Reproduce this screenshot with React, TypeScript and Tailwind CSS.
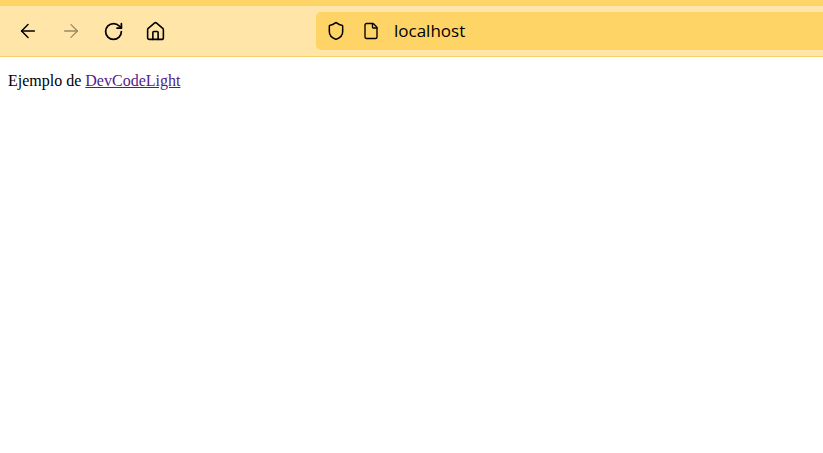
import { ArrowLeft, ArrowRight, RotateCw, House, Shield, File } from 'lucide-react';

export default function App() {
  return (
    <div className="w-[823px] h-[453px] bg-white overflow-hidden">
      <div className="h-[6px] bg-[#ffd466]" />
      <div className="h-[51px] bg-[#ffe6a8] border-b border-[#f5cf6a] flex items-center">
        <div className="flex items-center gap-[21px] pl-[17px] w-[316px]">
          <ArrowLeft size={22} strokeWidth={1.6} className="text-black" />
          <ArrowRight size={22} strokeWidth={1.4} className="text-[#9a8a62]" />
          <RotateCw size={21} strokeWidth={2} className="text-black" />
          <House size={21} strokeWidth={1.8} className="text-black" />
        </div>
        <div className="flex-1 h-[38px] bg-[#ffd466] rounded-l-[5px] flex items-center pl-[10px]">
          <Shield size={20} strokeWidth={1.8} className="text-black" />
          <File size={18} strokeWidth={1.8} className="text-black ml-[16px]" />
          <span className="ml-[14px] text-[17px] text-black" style={{ fontFamily: '"Open Sans", sans-serif' }}>localhost</span>
        </div>
      </div>
      <p className="px-2 pt-[12px] text-[16px] text-black" style={{ fontFamily: '"Liberation Serif", serif' }}>
        Ejemplo de <a href="#" className="underline text-[#551a8b]">DevCodeLight</a>
      </p>
    </div>
  );
}
